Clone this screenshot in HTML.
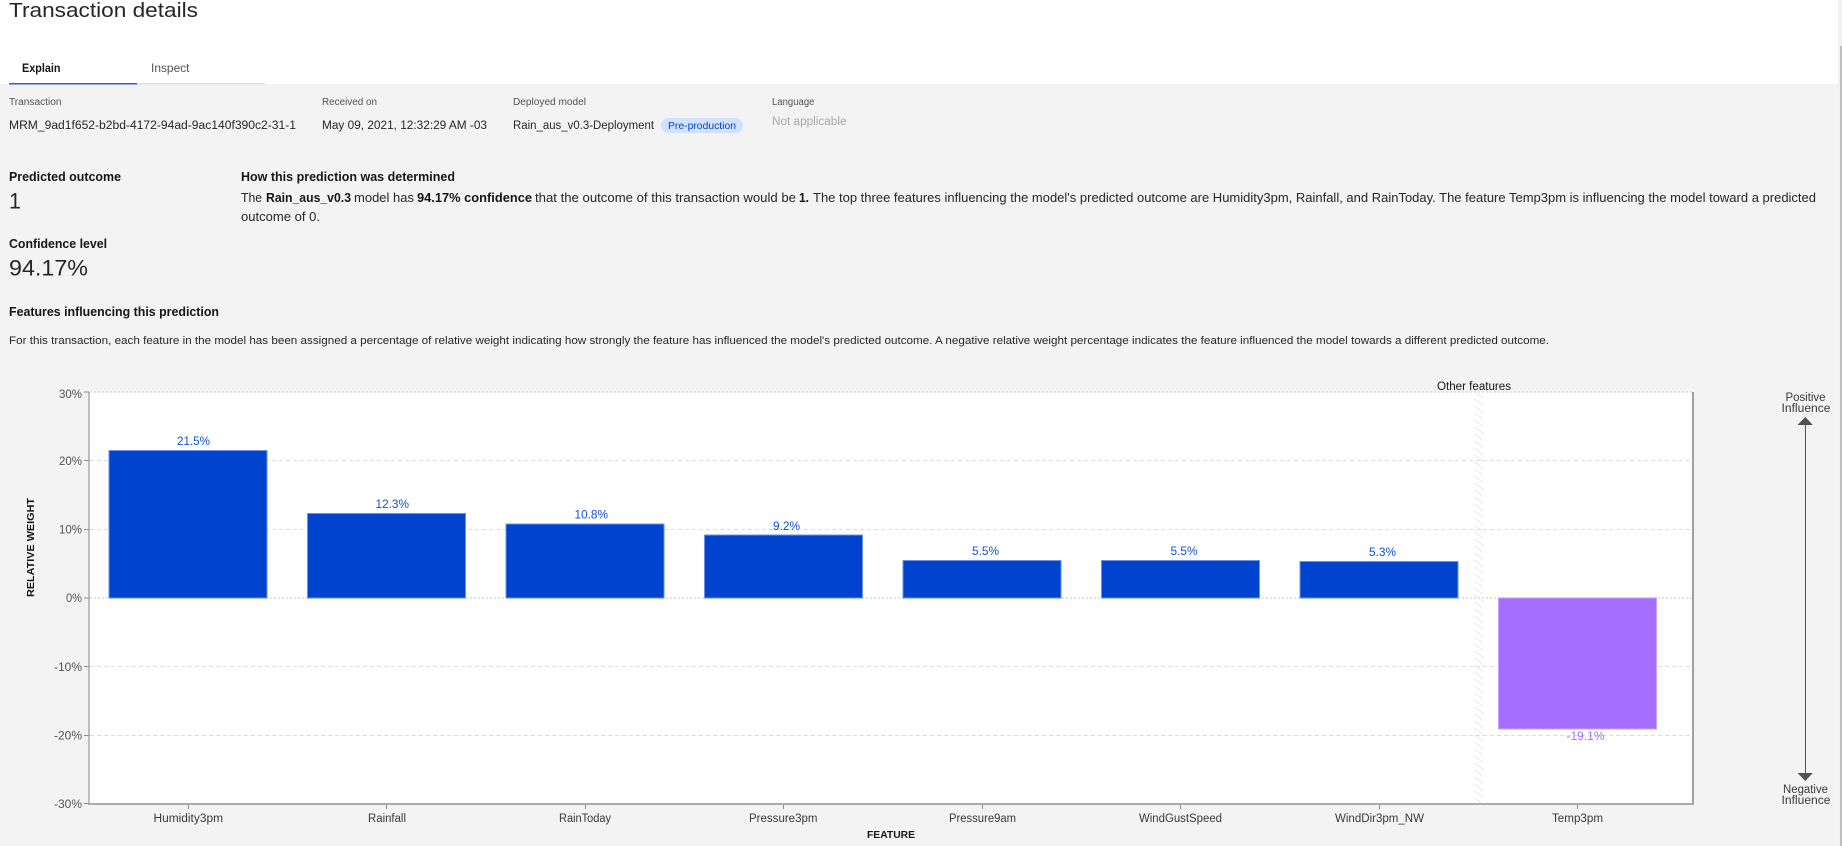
<!DOCTYPE html>
<html lang="en">
<head>
<meta charset="utf-8">
<title>Transaction details</title>
<style>
html,body{margin:0;padding:0;width:1842px;height:846px;overflow:hidden;background:#f3f3f3}
svg{display:block;position:absolute;left:0;top:0}
text{font-family:"Liberation Sans",sans-serif;fill:#161616}
.l{font-size:10px;fill:#525252}
.v{font-size:11.5px;fill:#262626}
.h{font-size:13px;font-weight:700;fill:#161616}
.p{font-size:13px;fill:#262626}
.b{font-size:13px;font-weight:700;fill:#161616}
.big{font-size:22px;fill:#262626;font-weight:400}
.y{font-size:12px;fill:#525252;text-anchor:start}
.x{font-size:11.5px;fill:#393939}
.d{font-size:11.5px;fill:#0f50d6}
.g{stroke:#dcdcdc;stroke-width:1;stroke-dasharray:4 3}
.g2{stroke:#e2e2e2;stroke-width:2;stroke-dasharray:2 2}
.t{stroke:#8d8d8d;stroke-width:1}
</style>
</head>
<body>
<svg width="1842" height="846" viewBox="0 0 1842 846" xmlns="http://www.w3.org/2000/svg">
<defs>
<pattern id="hatch" width="9" height="7" patternUnits="userSpaceOnUse" x="1474" y="392">
<rect width="9" height="7" fill="#fff"/>
<path d="M-1 -1L10 7M-1 6L3 9M6 -2L10 1" stroke="#efefef" stroke-width="1.500" fill="none"/>
</pattern>
</defs>

<rect x="0" y="0" width="1842" height="846" fill="#f3f3f3"/>
<rect x="0" y="0" width="1838" height="84" fill="#ffffff"/>
<rect x="1838" y="0" width="4" height="846" fill="#f1f1f1"/>
<rect x="1840" y="46" width="2" height="800" fill="#bdbdbd"/>

<text x="9" y="17" font-size="20.5" textLength="189" lengthAdjust="spacingAndGlyphs" style="fill:#262626">Transaction details</text>

<rect x="137" y="83" width="128" height="1.5" fill="#e0e0e0"/>
<rect x="9" y="83" width="128" height="1.5" fill="#2a62d9"/>
<text x="22" y="72" font-size="11.5" font-weight="700" textLength="38.500" lengthAdjust="spacingAndGlyphs">Explain</text>
<text x="151" y="72" font-size="11.5" textLength="38.500" lengthAdjust="spacingAndGlyphs" style="fill:#525252">Inspect</text>

<text class="l" x="9" y="105" textLength="52.500" lengthAdjust="spacingAndGlyphs">Transaction</text>
<text class="v" x="9" y="129" textLength="287" lengthAdjust="spacingAndGlyphs">MRM_9ad1f652-b2bd-4172-94ad-9ac140f390c2-31-1</text>
<text class="l" x="322" y="105" textLength="55" lengthAdjust="spacingAndGlyphs">Received on</text>
<text class="v" x="322" y="129" textLength="165" lengthAdjust="spacingAndGlyphs">May 09, 2021, 12:32:29 AM -03</text>
<text class="l" x="513" y="105" textLength="73" lengthAdjust="spacingAndGlyphs">Deployed model</text>
<text class="v" x="513" y="129" textLength="141" lengthAdjust="spacingAndGlyphs">Rain_aus_v0.3-Deployment</text>
<rect x="661" y="118" width="82" height="15" rx="7.500" fill="#d0e2ff"/>
<text x="668" y="129" font-size="10.500" textLength="68" lengthAdjust="spacingAndGlyphs" style="fill:#0043ce">Pre-production</text>
<text class="l" x="772" y="105" textLength="42.500" lengthAdjust="spacingAndGlyphs">Language</text>
<text x="772" y="125" font-size="11.500" textLength="74.500" lengthAdjust="spacingAndGlyphs" style="fill:#a8a8a8">Not applicable</text>

<text class="h" x="9" y="181" textLength="112" lengthAdjust="spacingAndGlyphs">Predicted outcome</text>
<text class="big" x="9" y="208.500" textLength="12" lengthAdjust="spacingAndGlyphs">1</text>
<text class="h" x="9" y="248" textLength="98" lengthAdjust="spacingAndGlyphs">Confidence level</text>
<text class="big" x="9" y="275.500" textLength="79" lengthAdjust="spacingAndGlyphs">94.17%</text>

<text class="h" x="241" y="181" textLength="214" lengthAdjust="spacingAndGlyphs">How this prediction was determined</text>
<text class="p" x="241" y="202" textLength="21" lengthAdjust="spacingAndGlyphs">The</text>
<text class="b" x="266" y="202" textLength="85" lengthAdjust="spacingAndGlyphs">Rain_aus_v0.3</text>
<text class="p" x="354" y="202" textLength="60" lengthAdjust="spacingAndGlyphs">model has</text>
<text class="b" x="417" y="202" textLength="115" lengthAdjust="spacingAndGlyphs">94.17% confidence</text>
<text class="p" x="535" y="202" textLength="261" lengthAdjust="spacingAndGlyphs">that the outcome of this transaction would be</text>
<text class="b" x="799" y="202" textLength="10" lengthAdjust="spacingAndGlyphs">1.</text>
<text class="p" x="813" y="202" textLength="1003" lengthAdjust="spacingAndGlyphs">The top three features influencing the model's predicted outcome are Humidity3pm, Rainfall, and RainToday. The feature Temp3pm is influencing the model toward a predicted</text>
<text class="p" x="241" y="221" textLength="79" lengthAdjust="spacingAndGlyphs">outcome of 0.</text>

<text class="h" x="9" y="316" textLength="210" lengthAdjust="spacingAndGlyphs">Features influencing this prediction</text>
<text x="9" y="344" font-size="11" textLength="1540" lengthAdjust="spacingAndGlyphs" style="fill:#262626">For this transaction, each feature in the model has been assigned a percentage of relative weight indicating how strongly the feature has influenced the model's predicted outcome. A negative relative weight percentage indicates the feature influenced the model towards a different predicted outcome.</text>

<!-- chart -->
<rect x="90" y="392" width="1602" height="411" fill="#ffffff"/>
<rect x="1474" y="392" width="9" height="411" fill="url(#hatch)"/>

<line class="g2" x1="90" x2="1692" y1="392" y2="392"/>
<line class="g" x1="90" x2="1692" y1="460.500" y2="460.500"/>
<line class="g" x1="90" x2="1692" y1="529.500" y2="529.500"/>
<line class="g2" x1="90" x2="1692" y1="598" y2="598"/>
<line class="g" x1="90" x2="1692" y1="666.500" y2="666.500"/>
<line class="g" x1="90" x2="1692" y1="735.500" y2="735.500"/>

<g fill="#0043ce" stroke="#6b93e6" stroke-width="1">
<rect x="109" y="450.500" width="158" height="147.500"/>
<rect x="307.500" y="513.500" width="158" height="84.500"/>
<rect x="506" y="524" width="158" height="74"/>
<rect x="704.500" y="535" width="158" height="63"/>
<rect x="903" y="560.500" width="158" height="37.500"/>
<rect x="1101.500" y="560.500" width="158" height="37.500"/>
<rect x="1300" y="561.500" width="158" height="36.500"/>
</g>
<rect x="1498.500" y="598" width="158" height="131" fill="#a56eff" stroke="#c5a3ff" stroke-width="1"/>

<text class="d" x="177" y="445" textLength="33" lengthAdjust="spacingAndGlyphs">21.5%</text>
<text class="d" x="375.500" y="508" textLength="33.500" lengthAdjust="spacingAndGlyphs">12.3%</text>
<text class="d" x="574.500" y="518.500" textLength="33.500" lengthAdjust="spacingAndGlyphs">10.8%</text>
<text class="d" x="773" y="530" textLength="27" lengthAdjust="spacingAndGlyphs">9.2%</text>
<text class="d" x="972" y="555" textLength="27" lengthAdjust="spacingAndGlyphs">5.5%</text>
<text class="d" x="1170.500" y="555" textLength="27" lengthAdjust="spacingAndGlyphs">5.5%</text>
<text class="d" x="1369" y="556" textLength="27" lengthAdjust="spacingAndGlyphs">5.3%</text>
<text class="d" x="1566.500" y="740" textLength="38" lengthAdjust="spacingAndGlyphs" style="fill:#a56eff">-19.1%</text>

<!-- axes -->
<rect x="88" y="392" width="2" height="412" fill="#bdbdbd"/>
<rect x="1692" y="392" width="2" height="412" fill="#a0a0a0"/>
<rect x="88" y="803" width="1606" height="2" fill="#ababab"/>
<g class="t">
<line x1="84" x2="89" y1="392" y2="392"/>
<line x1="84" x2="89" y1="460.500" y2="460.500"/>
<line x1="84" x2="89" y1="529.500" y2="529.500"/>
<line x1="84" x2="89" y1="598" y2="598"/>
<line x1="84" x2="89" y1="666.500" y2="666.500"/>
<line x1="84" x2="89" y1="735.500" y2="735.500"/>
<line x1="84" x2="89" y1="803.500" y2="803.500"/>
<line x1="188.500" x2="188.500" y1="805" y2="809"/>
<line x1="386.500" x2="386.500" y1="805" y2="809"/>
<line x1="585.500" x2="585.500" y1="805" y2="809"/>
<line x1="783.500" x2="783.500" y1="805" y2="809"/>
<line x1="982.500" x2="982.500" y1="805" y2="809"/>
<line x1="1180.500" x2="1180.500" y1="805" y2="809"/>
<line x1="1379.500" x2="1379.500" y1="805" y2="809"/>
<line x1="1577.500" x2="1577.500" y1="805" y2="809"/>
</g>

<text class="y" x="59" y="398" textLength="23" lengthAdjust="spacingAndGlyphs">30%</text>
<text class="y" x="59" y="465" textLength="23" lengthAdjust="spacingAndGlyphs">20%</text>
<text class="y" x="59" y="533.500" textLength="23" lengthAdjust="spacingAndGlyphs">10%</text>
<text class="y" x="66" y="602" textLength="16" lengthAdjust="spacingAndGlyphs">0%</text>
<text class="y" x="54" y="671" textLength="28" lengthAdjust="spacingAndGlyphs">-10%</text>
<text class="y" x="54" y="739.500" textLength="28" lengthAdjust="spacingAndGlyphs">-20%</text>
<text class="y" x="54" y="808" textLength="28" lengthAdjust="spacingAndGlyphs">-30%</text>

<text class="x" x="153.500" y="822" textLength="69.500" lengthAdjust="spacingAndGlyphs">Humidity3pm</text>
<text class="x" x="368" y="822" textLength="38" lengthAdjust="spacingAndGlyphs">Rainfall</text>
<text class="x" x="559" y="822" textLength="52" lengthAdjust="spacingAndGlyphs">RainToday</text>
<text class="x" x="749" y="822" textLength="68.500" lengthAdjust="spacingAndGlyphs">Pressure3pm</text>
<text class="x" x="949" y="822" textLength="67" lengthAdjust="spacingAndGlyphs">Pressure9am</text>
<text class="x" x="1139" y="822" textLength="83" lengthAdjust="spacingAndGlyphs">WindGustSpeed</text>
<text class="x" x="1335" y="822" textLength="89" lengthAdjust="spacingAndGlyphs">WindDir3pm_NW</text>
<text class="x" x="1552" y="822" textLength="51" lengthAdjust="spacingAndGlyphs">Temp3pm</text>

<text x="867" y="838" font-size="10.500" font-weight="700" textLength="48" lengthAdjust="spacingAndGlyphs">FEATURE</text>
<text transform="translate(34 597) rotate(-90)" x="0" y="0" font-size="10.500" font-weight="700" textLength="99" lengthAdjust="spacingAndGlyphs">RELATIVE WEIGHT</text>

<text x="1437" y="390" font-size="11.500" textLength="74" lengthAdjust="spacingAndGlyphs">Other features</text>

<!-- influence -->
<text class="x" x="1785.500" y="401" textLength="40" lengthAdjust="spacingAndGlyphs">Positive</text>
<text class="x" x="1781.500" y="412" textLength="49" lengthAdjust="spacingAndGlyphs">Influence</text>
<path d="M1805.300 417L1812.800 425H1797.500Z" fill="#525252"/>
<line x1="1805.500" x2="1805.500" y1="425" y2="773" stroke="#525252" stroke-width="1"/>
<path d="M1797.500 773H1812.800L1805.300 781Z" fill="#525252"/>
<text class="x" x="1783" y="793" textLength="45" lengthAdjust="spacingAndGlyphs">Negative</text>
<text class="x" x="1781.500" y="804" textLength="49" lengthAdjust="spacingAndGlyphs">Influence</text>
</svg>
</body>
</html>
